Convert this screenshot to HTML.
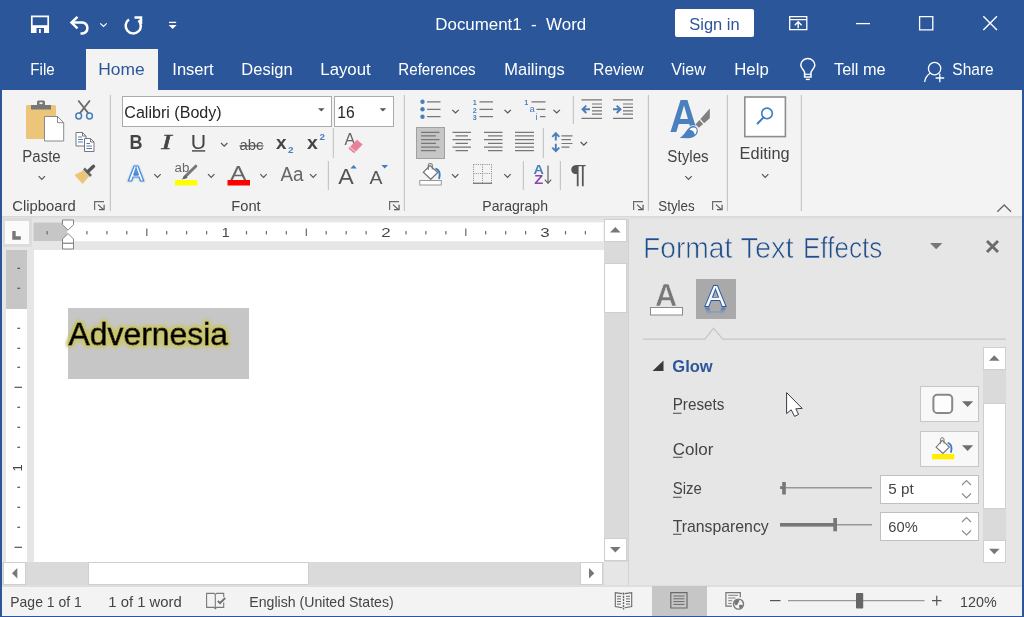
<!DOCTYPE html>
<html lang="en">
<head>
<meta charset="utf-8">
<title>Document1 - Word</title>
<style>
html,body{margin:0;padding:0;}
body{width:1024px;height:617px;overflow:hidden;position:relative;background:#e6e6e6;font-family:"Liberation Sans",sans-serif;}
.b{position:absolute;box-sizing:border-box;}
svg{position:absolute;left:0;top:0;will-change:transform;}
text{font-family:"Liberation Sans",sans-serif;}
</style>
</head>
<body>
<!-- structural boxes -->
<div class="b" style="left:0;top:0;width:1024px;height:90px;background:#2b579a"></div>
<div class="b" style="left:86px;top:49px;width:71.5px;height:41px;background:#f3f3f3"></div>
<div class="b" style="left:0;top:90px;width:1024px;height:127px;background:#f3f3f3;border-bottom:1px solid #d9d9d9"></div>
<div class="b" style="left:0;top:217px;width:1024px;height:3px;background:linear-gradient(#dedede,#e6e6e6)"></div>
<!-- ruler corner -->
<div class="b" style="left:3px;top:218px;width:29px;height:29px;background:#dcdcdc"></div>
<div class="b" style="left:5px;top:221px;width:24px;height:23px;background:#fbfbfb"></div>
<!-- horizontal ruler -->
<!-- page -->
<div class="b" style="left:34px;top:250px;width:570px;height:312px;background:#fff"></div>
<!-- vertical ruler -->
<div class="b" style="left:6px;top:250px;width:21px;height:311.5px;background:#fff"></div>
<div class="b" style="left:6px;top:250px;width:21px;height:59px;background:#c6c6c6"></div>
<!-- selection -->
<div class="b" style="left:68px;top:308px;width:181px;height:70.5px;background:#c6c6c6"></div>
<!-- v scrollbar -->
<div class="b" style="left:604px;top:219px;width:24px;height:343px;background:#dadada"></div>
<div class="b" style="left:628px;top:219px;width:1px;height:366px;background:#d2d2d2"></div>
<div class="b" style="left:604px;top:219px;width:23px;height:22.5px;background:#fff;border:1px solid #cfcfcf"></div>
<div class="b" style="left:604px;top:263px;width:23px;height:50px;background:#fff;border:1px solid #cfcfcf"></div>
<div class="b" style="left:604px;top:538px;width:23px;height:22.5px;background:#fff;border:1px solid #cfcfcf"></div>
<!-- h scrollbar -->
<div class="b" style="left:2px;top:562px;width:602px;height:23px;background:#dadada"></div>
<div class="b" style="left:3px;top:562px;width:22.5px;height:22.5px;background:#fff;border:1px solid #cfcfcf"></div>
<div class="b" style="left:88px;top:562px;width:220.5px;height:22.5px;background:#fff;border:1px solid #cfcfcf"></div>
<div class="b" style="left:580px;top:562px;width:22.5px;height:22.5px;background:#fff;border:1px solid #cfcfcf"></div>
<!-- pane tab selected -->
<div class="b" style="left:696px;top:278.6px;width:40.2px;height:40.2px;background:#a9a9a9"></div>
<!-- pane scrollbar -->
<div class="b" style="left:983px;top:347px;width:22.5px;height:215px;background:#dadada"></div>
<div class="b" style="left:983px;top:347px;width:22.5px;height:22.5px;background:#fff;border:1px solid #cfcfcf"></div>
<div class="b" style="left:983px;top:403px;width:22.5px;height:105.5px;background:#fff;border:1px solid #cfcfcf"></div>
<div class="b" style="left:983px;top:540px;width:22.5px;height:22.5px;background:#fff;border:1px solid #cfcfcf"></div>
<!-- pane controls -->
<div class="b" style="left:920px;top:386px;width:58.5px;height:36px;background:#f8f8f8;border:1px solid #c6c6c6"></div>
<div class="b" style="left:920px;top:431px;width:58.5px;height:35.5px;background:#f8f8f8;border:1px solid #c6c6c6"></div>
<div class="b" style="left:880px;top:475px;width:98.5px;height:28.5px;background:#fff;border:1px solid #c0c0c0"></div>
<div class="b" style="left:880px;top:512px;width:98.5px;height:28.5px;background:#fff;border:1px solid #c0c0c0"></div>
<!-- status bar -->
<div class="b" style="left:0;top:585px;width:1024px;height:32px;background:#f3f3f3;border-top:2px solid #dedede"></div>
<div class="b" style="left:652px;top:586px;width:54.7px;height:30px;background:#c6c6c6"></div>
<!-- ribbon controls -->
<div class="b" style="left:122px;top:96px;width:209.5px;height:30.5px;background:#fff;border:1px solid #ababab"></div>
<div class="b" style="left:334px;top:96px;width:59.5px;height:30.5px;background:#fff;border:1px solid #ababab"></div>
<div class="b" style="left:416px;top:127px;width:28.7px;height:31.5px;background:#c6c6c6;border:1px solid #a0a0a0"></div>
<div class="b" style="left:675px;top:9px;width:79px;height:28px;background:#fff;border-radius:2px"></div>
<!-- window borders -->
<div class="b" style="left:0;top:49px;width:2px;height:568px;background:#2b579a"></div>
<div class="b" style="left:1022px;top:49px;width:2px;height:568px;background:#2b579a"></div>
<div class="b" style="left:0;top:615.6px;width:1024px;height:1.4px;background:#2b579a"></div>
<svg width="1024" height="617" viewBox="0 0 1024 617">
<rect x="33.4" y="222.4" width="570.2" height="18.8" fill="#fff"/>
<rect x="33.4" y="222.4" width="33.8" height="18.8" fill="#c6c6c6"/>
<rect x="109.8" y="95" width="1.2" height="116" fill="#c6c6c6"/>
<rect x="403.8" y="95" width="1.2" height="116" fill="#c6c6c6"/>
<rect x="647.8" y="95" width="1.2" height="116" fill="#c6c6c6"/>
<rect x="726.8" y="95" width="1.2" height="116" fill="#c6c6c6"/>
<rect x="800.8" y="95" width="1.2" height="116" fill="#c6c6c6"/>
<rect x="332.8" y="128" width="1.2" height="30" fill="#c6c6c6"/>
<rect x="327.8" y="161" width="1.2" height="29" fill="#c6c6c6"/>
<rect x="572.8" y="96" width="1.2" height="28" fill="#c6c6c6"/>
<rect x="542.8" y="128" width="1.2" height="30" fill="#c6c6c6"/>
<rect x="522.8" y="161" width="1.2" height="29" fill="#c6c6c6"/>
<rect x="559.8" y="161" width="1.2" height="29" fill="#c6c6c6"/>
<rect x="46.5" y="231.1" width="1.2" height="3.3" fill="#666"/>
<rect x="86.3" y="231.1" width="1.2" height="3.3" fill="#666"/>
<rect x="106.3" y="231.1" width="1.2" height="3.3" fill="#666"/>
<rect x="126.2" y="231.1" width="1.2" height="3.3" fill="#666"/>
<rect x="146.2" y="228.5" width="1.2" height="7.5" fill="#666"/>
<rect x="166.1" y="231.1" width="1.2" height="3.3" fill="#666"/>
<rect x="186.0" y="231.1" width="1.2" height="3.3" fill="#666"/>
<rect x="206.0" y="231.1" width="1.2" height="3.3" fill="#666"/>
<rect x="245.9" y="231.1" width="1.2" height="3.3" fill="#666"/>
<rect x="265.8" y="231.1" width="1.2" height="3.3" fill="#666"/>
<rect x="285.7" y="231.1" width="1.2" height="3.3" fill="#666"/>
<rect x="305.7" y="228.5" width="1.2" height="7.5" fill="#666"/>
<rect x="325.6" y="231.1" width="1.2" height="3.3" fill="#666"/>
<rect x="345.6" y="231.1" width="1.2" height="3.3" fill="#666"/>
<rect x="365.5" y="231.1" width="1.2" height="3.3" fill="#666"/>
<rect x="405.4" y="231.1" width="1.2" height="3.3" fill="#666"/>
<rect x="425.3" y="231.1" width="1.2" height="3.3" fill="#666"/>
<rect x="445.3" y="231.1" width="1.2" height="3.3" fill="#666"/>
<rect x="465.2" y="228.5" width="1.2" height="7.5" fill="#666"/>
<rect x="485.1" y="231.1" width="1.2" height="3.3" fill="#666"/>
<rect x="505.1" y="231.1" width="1.2" height="3.3" fill="#666"/>
<rect x="525.0" y="231.1" width="1.2" height="3.3" fill="#666"/>
<rect x="564.9" y="231.1" width="1.2" height="3.3" fill="#666"/>
<rect x="584.8" y="231.1" width="1.2" height="3.3" fill="#666"/>
<rect x="17.3" y="267.7" width="2.8" height="1.2" fill="#555"/>
<rect x="17.3" y="287.7" width="2.8" height="1.2" fill="#555"/>
<rect x="17.3" y="327.7" width="2.8" height="1.2" fill="#555"/>
<rect x="17.3" y="347.7" width="2.8" height="1.2" fill="#555"/>
<rect x="17.3" y="366.7" width="2.8" height="1.2" fill="#555"/>
<rect x="17.3" y="406.7" width="2.8" height="1.2" fill="#555"/>
<rect x="17.3" y="426.7" width="2.8" height="1.2" fill="#555"/>
<rect x="17.3" y="446.7" width="2.8" height="1.2" fill="#555"/>
<rect x="17.3" y="486.7" width="2.8" height="1.2" fill="#555"/>
<rect x="17.3" y="506.7" width="2.8" height="1.2" fill="#555"/>
<rect x="17.3" y="526.6999999999999" width="2.8" height="1.2" fill="#555"/>
<rect x="14.5" y="386.7" width="7.5" height="1.2" fill="#555"/>
<rect x="14.5" y="546.6999999999999" width="7.5" height="1.2" fill="#555"/>
<path d="M100.3 23.3 l3.2 3.2 l3.2 -3.2" fill="none" stroke="#fff" stroke-width="1.2"/>
<path d="M38.6 176.2 l3.2 3.2 l3.2 -3.2" fill="none" stroke="#555" stroke-width="1.2"/>
<path d="M221 143 l3.2 3.2 l3.2 -3.2" fill="none" stroke="#555" stroke-width="1.2"/>
<path d="M154.3 174.2 l3.2 3.2 l3.2 -3.2" fill="none" stroke="#555" stroke-width="1.2"/>
<path d="M208 174.2 l3.2 3.2 l3.2 -3.2" fill="none" stroke="#555" stroke-width="1.2"/>
<path d="M260.3 174.2 l3.2 3.2 l3.2 -3.2" fill="none" stroke="#555" stroke-width="1.2"/>
<path d="M310 174.2 l3.2 3.2 l3.2 -3.2" fill="none" stroke="#555" stroke-width="1.2"/>
<path d="M452.3 109.8 l3.2 3.2 l3.2 -3.2" fill="none" stroke="#555" stroke-width="1.2"/>
<path d="M504.5 109.8 l3.2 3.2 l3.2 -3.2" fill="none" stroke="#555" stroke-width="1.2"/>
<path d="M553.5 109.8 l3.2 3.2 l3.2 -3.2" fill="none" stroke="#555" stroke-width="1.2"/>
<path d="M580.6 142 l3.2 3.2 l3.2 -3.2" fill="none" stroke="#555" stroke-width="1.2"/>
<path d="M452 174.2 l3.2 3.2 l3.2 -3.2" fill="none" stroke="#555" stroke-width="1.2"/>
<path d="M504.3 174.2 l3.2 3.2 l3.2 -3.2" fill="none" stroke="#555" stroke-width="1.2"/>
<path d="M685.3 176.2 l3.2 3.2 l3.2 -3.2" fill="none" stroke="#555" stroke-width="1.2"/>
<path d="M762 174.2 l3.2 3.2 l3.2 -3.2" fill="none" stroke="#555" stroke-width="1.2"/>
<path d="M94.6 210.0 V201.6 H104.0" fill="none" stroke="#6a6a6a" stroke-width="1.2"/><path d="M98.0 204.6 L103.5 209.6 M99.0 209.6 H104.1 V204.8" fill="none" stroke="#5a5a5a" stroke-width="1.2"/>
<path d="M389.6 210.0 V201.6 H399.0" fill="none" stroke="#6a6a6a" stroke-width="1.2"/><path d="M393.0 204.6 L398.5 209.6 M394.0 209.6 H399.1 V204.8" fill="none" stroke="#5a5a5a" stroke-width="1.2"/>
<path d="M633.6 210.0 V201.6 H643.0" fill="none" stroke="#6a6a6a" stroke-width="1.2"/><path d="M637.0 204.6 L642.5 209.6 M638.0 209.6 H643.1 V204.8" fill="none" stroke="#5a5a5a" stroke-width="1.2"/>
<path d="M712.6 210.0 V201.6 H722.0" fill="none" stroke="#6a6a6a" stroke-width="1.2"/><path d="M716.0 204.6 L721.5 209.6 M717.0 209.6 H722.1 V204.8" fill="none" stroke="#5a5a5a" stroke-width="1.2"/>
<!-- title bar icons -->
<g fill="none" stroke="#fff">
<!-- save -->
<path d="M31.8 16.3 H48.2 V32.2 H31.8 Z" stroke-width="1.7"/>
<path d="M32 25.2 H48 V32 H32 Z" fill="#fff" stroke="none"/>
<path d="M36.5 28 H44 V33 H36.5 Z" fill="#2b579a" stroke="none"/>
<path d="M39 29 H40.8 V33 H39 Z" fill="#fff" stroke="none"/>
<!-- undo -->
<path d="M77.5 16.8 L71.5 22.6 L77.5 28.4" stroke-width="2.5"/>
<path d="M72 22.6 H82.5 A6 5.6 0 0 1 82.5 33.6 H80.5" stroke-width="2.5"/>
<!-- redo -->
<path d="M129 19.5 A7.6 7.6 0 1 0 138.5 20.3" stroke-width="2.5"/>
<path d="M134.5 17.4 H141 V24" stroke-width="2.5"/>
<!-- qat -->
<path d="M169 22.4 H176.2" stroke-width="1.3"/>
<path d="M168.6 25 H176.6 L172.6 29 Z" fill="#fff" stroke="none"/>
<!-- ribbon display options -->
<path d="M789.7 16.7 H806.8 V29.6 H789.7 Z M789.7 19.6 H806.8" stroke-width="1.3"/>
<path d="M798.2 28.2 V22 M794.8 25.2 L798.2 21.8 L801.6 25.2" stroke-width="1.4"/>
<!-- min max close -->
<path d="M856 23.6 H870" stroke-width="1.3"/>
<path d="M919.6 16.6 H932.8 V29.8 H919.6 Z" stroke-width="1.3"/>
<path d="M983.3 16.3 L997 30 M997 16.3 L983.3 30" stroke-width="1.4"/>
<!-- bulb -->
<path d="M804.6 77 V72.5 C804.4 69.7 800.8 68.8 800.8 65 A7 6.45 0 0 1 814.8 65 C814.8 68.8 811.2 69.7 811 72.5 V77 Z" stroke-width="1.5"/>
<path d="M804.6 74.3 H811" stroke-width="1.2"/>
<path d="M805.8 79.4 H809.8" stroke-width="1.4"/>
<!-- share -->
<circle cx="934.6" cy="68.6" r="6.2" stroke-width="1.3"/>
<path d="M924.6 82 C925.3 77.5 927.5 74.8 930.2 73.2" stroke-width="1.3"/>
<path d="M939.8 73.8 V82.2 M935.6 78 H944.2" stroke-width="1.3"/>
</g>
<!-- clipboard group -->
<rect x="26" y="105" width="30" height="34" rx="1.5" fill="#edc57a"/>
<path d="M37 105 V102 Q37 100.5 38.5 100.5 H43.5 Q45 100.5 45 102 V105 H51 V109.5 H31 V105 Z" fill="#777"/>
<rect x="39.5" y="102.3" width="3" height="1.8" fill="#f3f3f3"/>
<path d="M44.5 116.5 H57.5 L63.7 122.7 V141 H44.5 Z" fill="#fff" stroke="#8a8a8a" stroke-width="1"/>
<path d="M57.5 116.5 V122.7 H63.7" fill="none" stroke="#8a8a8a" stroke-width="1"/>
<!-- scissors -->
<path d="M78.3 100.5 L88.6 113.6 M89.9 100.5 L79.6 113.6" stroke="#6a6a6a" stroke-width="1.8" fill="none"/>
<circle cx="78.7" cy="116" r="2.9" fill="none" stroke="#4a7ebb" stroke-width="1.5"/>
<circle cx="89.5" cy="116" r="2.9" fill="none" stroke="#4a7ebb" stroke-width="1.5"/>
<!-- copy -->
<path d="M76 132.5 H82.5 L86 136 V146 H76 Z" fill="#fff" stroke="#777" stroke-width="1"/>
<path d="M82.5 132.5 V136 H86" fill="none" stroke="#777" stroke-width="1"/>
<path d="M78 137 H82 M78 139.5 H83 M78 142 H83" stroke="#4a7ebb" stroke-width="1"/>
<path d="M84.5 138.5 H90.5 L94 142 V151.5 H84.5 Z" fill="#fff" stroke="#777" stroke-width="1"/>
<path d="M90.5 138.5 V142 H94" fill="none" stroke="#777" stroke-width="1"/>
<path d="M86.5 143.5 H90 M86.5 146 H92 M86.5 148.5 H92" stroke="#4a7ebb" stroke-width="1"/>
<!-- format painter -->
<path d="M74.5 175 L83.5 170.3 L89 176.5 L82.5 184 Z" fill="#edc57a"/>
<path d="M84 168.5 L91 176" stroke="#666" stroke-width="2.6" fill="none"/>
<path d="M88 171.5 L93.5 166.3" stroke="#555" stroke-width="3.4" fill="none" stroke-linecap="round"/>
<!-- font group -->
<path d="M318 108.3 H324.6 L321.3 111.6 Z" fill="#555"/>
<path d="M379.6 108.3 H386.2 L382.9 111.6 Z" fill="#555"/>
<text x="129.6" y="149" font-size="19.5" font-weight="bold" fill="#444" textLength="13" lengthAdjust="spacingAndGlyphs">B</text>
<text x="161.3" y="149" font-size="20.5" font-style="italic" fill="#444" stroke="#444" stroke-width="0.5" style="font-family:'Liberation Serif',serif" textLength="10.4" lengthAdjust="spacingAndGlyphs">I</text>
<text x="190.8" y="149" font-size="19.5" fill="#444" textLength="15.4" lengthAdjust="spacingAndGlyphs">U</text>
<rect x="192" y="150.2" width="13.2" height="1.4" fill="#444"/>
<text x="239.5" y="150" font-size="15.5" fill="#555" textLength="24" lengthAdjust="spacingAndGlyphs">abc</text>
<rect x="239.5" y="145.3" width="24" height="1.2" fill="#555"/>
<text x="276" y="149" font-size="18.5" font-weight="bold" fill="#444" textLength="10.5" lengthAdjust="spacingAndGlyphs">x</text>
<text x="288" y="153" font-size="8.5" font-weight="bold" fill="#4a7ebb" textLength="5.5" lengthAdjust="spacingAndGlyphs">2</text>
<text x="307" y="149" font-size="18.5" font-weight="bold" fill="#444" textLength="10.8" lengthAdjust="spacingAndGlyphs">x</text>
<text x="319.6" y="139.6" font-size="8.5" font-weight="bold" fill="#4a7ebb" textLength="5.5" lengthAdjust="spacingAndGlyphs">2</text>
<text x="344.4" y="145" font-size="16" fill="#666" textLength="10.8" lengthAdjust="spacingAndGlyphs">A</text>
<path d="M357 139.7 L362.7 144.6 L354 153.3 L348.3 148.6 Z" fill="#e8829a"/>
<path d="M349.8 147 L355.6 151.8" stroke="#f3f3f3" stroke-width="0.8"/>
<!-- text effects A -->
<text x="127.8" y="181" font-size="22.5" font-weight="bold" fill="#fff" stroke="#4a8ad4" stroke-width="1.2" textLength="16.6" lengthAdjust="spacingAndGlyphs" style="filter:drop-shadow(0 0 1px #9cc3f0)">A</text>
<path d="M136 170.2 L138.3 175.8 H133.7 Z" fill="#4a8ad4"/>
<!-- highlight -->
<text x="174.6" y="172.4" font-size="12.5" fill="#666" textLength="14.8" lengthAdjust="spacingAndGlyphs">ab</text>
<path d="M195.8 166.2 L184.5 177.3" stroke="#777" stroke-width="3" fill="none" stroke-linecap="round"/>
<path d="M185.8 174.8 L181.5 179.6 L187.5 178 Z" fill="#666"/>
<rect x="175" y="180" width="22.2" height="5.5" fill="#ffff00"/>
<!-- font color -->
<text x="230.3" y="180" font-size="21" fill="#666" textLength="16" lengthAdjust="spacingAndGlyphs">A</text>
<rect x="227.5" y="180" width="22.5" height="5.5" fill="#ff0000"/>
<!-- Aa -->
<text x="280.5" y="181" font-size="19.5" fill="#666" textLength="23" lengthAdjust="spacingAndGlyphs">Aa</text>
<!-- grow/shrink -->
<text x="338.3" y="183.5" font-size="21.8" fill="#555" textLength="15.5" lengthAdjust="spacingAndGlyphs">A</text>
<path d="M350.4 168.6 L353.6 165 L356.8 168.6 Z" fill="#3b7cc4"/>
<text x="369.5" y="183.5" font-size="18.2" fill="#555" textLength="13" lengthAdjust="spacingAndGlyphs">A</text>
<path d="M381.4 165 H388 L384.7 168.6 Z" fill="#3b7cc4"/>
<!-- paragraph group -->
<g fill="#4a7ebb">
<circle cx="422.5" cy="101.8" r="2.2"/><circle cx="422.5" cy="109.3" r="2.2"/><circle cx="422.5" cy="116.7" r="2.2"/>
</g>
<g stroke="#777" stroke-width="1.2" fill="none">
<path d="M427 101.8 H440.5 M427 109.3 H440.5 M427 116.7 H440.5"/>
<path d="M479.5 101.8 H493 M479.5 109.3 H493 M479.5 116.7 H493"/>
<path d="M531.5 101.8 H545.5 M536.5 109.3 H545.5 M540 116.7 H545.5"/>
<!-- align left -->
<path d="M421 132.3 H439.5 M421 135.9 H436 M421 139.6 H439.5 M421 143.4 H436 M421 147.1 H439.5 M421 150.7 H436"/>
<path d="M452.5 132.3 H471 M455.5 135.9 H468 M452.5 139.6 H471 M455.5 143.4 H468 M452.5 147.1 H471 M455.5 150.7 H468"/>
<path d="M484 132.3 H502.5 M488 135.9 H502.5 M484 139.6 H502.5 M488 143.4 H502.5 M484 147.1 H502.5 M488 150.7 H502.5"/>
<path d="M515 132.3 H534 M515 135.9 H534 M515 139.6 H534 M515 143.4 H534 M515 147.1 H534 M515 150.7 H534"/>
<!-- line spacing lines -->
<path d="M561.5 135.9 H572.5 M561.5 139.7 H571 M561.5 143.5 H572.5 M561.5 147.2 H569.5"/>
<!-- indent -->
<path d="M581.5 99.8 H602 M592 104 H602 M592 107.4 H602 M592 110.8 H602 M592 114.2 H602 M581.5 118.4 H602"/>
<path d="M613 99.8 H633 M623 104 H633 M623 107.4 H633 M623 110.8 H633 M623 114.2 H633 M613 118.4 H633"/>
</g>
<g font-weight="bold" fill="#4a7ebb" font-size="8">
<text x="472.7" y="105.1" textLength="4" lengthAdjust="spacingAndGlyphs">1</text><text x="472.7" y="112.6" textLength="4" lengthAdjust="spacingAndGlyphs">2</text><text x="472.7" y="120.1" textLength="4" lengthAdjust="spacingAndGlyphs">3</text>
<text x="524.3" y="105.1" textLength="4" lengthAdjust="spacingAndGlyphs">1</text><text x="529.6" y="112.4" font-weight="normal" font-size="9.5">a</text><text x="535.4" y="120" font-weight="normal" font-size="9.5">i</text>
</g>
<g stroke="#4a7ebb" fill="none" stroke-width="1.9">
<path d="M590 109.3 H583 M586.3 105.6 L582.5 109.3 L586.3 113"/>
<path d="M613 109.3 H620 M616.7 105.6 L620.5 109.3 L616.7 113"/>
<path d="M555.8 133.2 V140.6 M555.8 143.8 V151.2 M552.3 136.8 L555.8 133.2 L559.3 136.8 M552.3 147.6 L555.8 151.2 L559.3 147.6"/>
</g>
<!-- shading -->
<path d="M430 165.5 L437.7 172.5 L430.8 179.3 L423.3 172.3 Z" fill="#fff" stroke="#777" stroke-width="1.2"/>
<path d="M428.3 170 V165 Q428.3 163.5 430.3 163.5 Q432.3 163.5 432.3 165 V169.5" fill="none" stroke="#777" stroke-width="1.1"/>
<path d="M436.2 168.8 Q441 171 439.2 178.2" fill="none" stroke="#3b7cc4" stroke-width="1.9" stroke-linecap="round"/>
<rect x="419.8" y="180.5" width="21.5" height="4.5" fill="#fff" stroke="#999" stroke-width="1"/>
<!-- borders -->
<path d="M473.5 164.5 H491.5 M473.5 164.5 V183 M491.5 164.5 V183 M482.5 164.5 V183 M473.5 173.5 H491.5" stroke="#8a8a8a" stroke-width="1" stroke-dasharray="1 1.2" fill="none"/>
<path d="M473 183.3 H492" stroke="#777" stroke-width="1.3"/>
<!-- sort -->
<text x="533.6" y="173.8" font-size="13.5" font-weight="bold" fill="#4a7ebb" textLength="10.4" lengthAdjust="spacingAndGlyphs">A</text>
<text x="534.2" y="184" font-size="12" font-weight="bold" fill="#8e44ad" textLength="9" lengthAdjust="spacingAndGlyphs">Z</text>
<path d="M548 165.5 V183 M544.8 179.7 L548 183.3 L551.2 179.7" stroke="#666" stroke-width="1.2" fill="none"/>
<!-- pilcrow -->
<text x="570" y="183.4" font-size="25" fill="#555" textLength="17" lengthAdjust="spacingAndGlyphs">¶</text>
<!-- styles / editing -->
<text x="669.4" y="131.8" font-size="46" font-weight="bold" fill="#4a80bd" textLength="29" lengthAdjust="spacingAndGlyphs">A</text>
<path d="M709.8 108.6 V118.3 L704.1 123.2 L700.4 119.1 Z" fill="#808080"/>
<path d="M699.4 120.1 L703.1 124 L698.9 127.7 L695.4 124.4 Z" fill="#808080"/>
<path d="M679.6 138 C685 135 686.5 129 690.5 126.8 C694 125 697.5 126.8 697.8 130.5 C698 134.5 694 138 688.5 138.2 Z" fill="#4a80bd" stroke="#f3f3f3" stroke-width="1.8" paint-order="stroke"/>
<path d="M689.5 129.8 C691 127.7 694.5 126.7 696.3 128.7 C697.3 130.5 696.3 133 694.8 134.8 C694.3 132 692.5 130.2 689.5 129.8 Z" fill="#fff"/>
<rect x="744.8" y="97" width="40.6" height="39.6" fill="#fff" stroke="#8e8e8e" stroke-width="1.6"/>
<circle cx="767" cy="113.4" r="5.3" fill="none" stroke="#3b7cc4" stroke-width="1.6"/>
<path d="M763.3 117.6 L757.6 123.5" stroke="#3b7cc4" stroke-width="2" stroke-linecap="round"/>
<!-- ruler markers -->
<path d="M14 231 V238 H20.8" fill="none" stroke="#777" stroke-width="3.4"/>
<path d="M62.5 220 H73.5 V224.7 L68 230.2 L62.5 224.7 Z" fill="#fff" stroke="#777" stroke-width="0.9"/>
<path d="M62.5 243.3 V239 L68 233.5 L73.5 239 V243.3 Z" fill="#fff" stroke="#777" stroke-width="0.9"/>
<path d="M62.5 243.3 H73.5 V249 H62.5 Z" fill="#fff" stroke="#777" stroke-width="0.9"/>
<!-- vertical ruler 1 -->
<text x="0" y="0" font-size="13" fill="#444" transform="translate(22 471.5) rotate(-90)">1</text>
<!-- scrollbar arrows -->
<g fill="#777">
<path d="M610 232.5 L615.3 227 L620.6 232.5 Z"/>
<path d="M610 547 H620.6 L615.3 552.5 Z"/>
<path d="M17.3 568 V578.6 L12 573.3 Z"/>
<path d="M589 568 V578.6 L594.3 573.3 Z"/>
<path d="M989 360.7 L994.3 355.2 L999.6 360.7 Z"/>
<path d="M989 548.8 H999.6 L994.3 554.3 Z"/>
<path d="M930 243 H942.4 L936.2 249.2 Z"/>
</g>
<path d="M987 241 L998 252 M998 241 L987 252" stroke="#6b6b6b" stroke-width="2.9" fill="none"/>
<!-- pane tab icons -->
<text x="654.9" y="305.5" font-size="32" font-weight="bold" fill="#777" stroke="#e6e6e6" stroke-width="0.6" textLength="22.2" lengthAdjust="spacingAndGlyphs">A</text>
<rect x="650.5" y="307.5" width="32" height="7.5" fill="#fff" stroke="#8a8a8a" stroke-width="1"/>
<linearGradient id="rf" x1="0" y1="0" x2="0" y2="1"><stop offset="0" stop-color="#3f68ad" stop-opacity="0.8"/><stop offset="1" stop-color="#7f9ccb" stop-opacity="0.15"/></linearGradient>
<path d="M704.8 307.6 H709.3 L710.8 311.2 H720 L721.5 307.6 H726 L723.3 314.6 H720 L719.2 313 H711.6 L710.8 314.6 H707.5 Z" fill="url(#rf)"/>
<text x="705.4" y="306" font-size="29.2" fill="#f4f8ff" stroke="#2b579a" stroke-width="1.9" paint-order="stroke" textLength="19.9" lengthAdjust="spacingAndGlyphs">A</text>
<path d="M643 339.2 H704.8 L713.5 328.3 L722.8 339.2 H1006" fill="none" stroke="#c6c6c6" stroke-width="1.2"/>
<!-- glow triangle -->
<path d="M663.5 360.5 V371 H652.5 Z" fill="#3a3a3a"/>
<!-- label underlines -->
<path d="M673 413.3 H681.5 M673 457.3 H682.5 M673 497.3 H681.5 M673 534.3 H681.5" stroke="#444" stroke-width="1.1"/>
<!-- presets -->
<rect x="933.4" y="394.8" width="18.8" height="18.2" rx="3.8" fill="#fdfdfd" stroke="#888" stroke-width="2"/>
<path d="M962 401.3 H973.2 L967.6 407 Z" fill="#6e6e6e"/>
<path d="M962 445.3 H973.2 L967.6 451 Z" fill="#6e6e6e"/>
<!-- color bucket -->
<path d="M942.3 440.4 L949.4 447 L942.9 453.5 L936.1 447.1 Z" fill="#fff" stroke="#777" stroke-width="1.1"/>
<path d="M940.6 443.8 V439.3 Q940.6 437.7 942.3 437.7 Q944 437.7 944 439.3 V443.6" fill="none" stroke="#777" stroke-width="1"/>
<path d="M948.4 443 Q952.8 445 951 452" fill="none" stroke="#3b7cc4" stroke-width="1.8" stroke-linecap="round"/>
<rect x="932" y="454" width="22.2" height="5.3" fill="#ffee00"/>
<!-- sliders -->
<path d="M780 487.7 H872" stroke="#979797" stroke-width="1.4"/>
<rect x="782.2" y="482" width="3.6" height="12.5" fill="#777"/>
<rect x="780" y="486.3" width="3" height="2.6" fill="#777"/>
<path d="M836 524.8 H872" stroke="#979797" stroke-width="1.4"/>
<rect x="780" y="523" width="56" height="3.6" fill="#777"/>
<rect x="833.3" y="518" width="3.7" height="13.3" fill="#777"/>
<!-- spinner carets -->
<g fill="none" stroke="#8a8a8a" stroke-width="1.1">
<path d="M962 485 L966.5 480.5 L971 485 M962 493.5 L966.5 498 L971 493.5"/>
<path d="M962 522 L966.5 517.5 L971 522 M962 530.5 L966.5 535 L971 530.5"/>
</g>
<!-- mouse cursor -->
<path d="M786.6 392.6 V413.6 L791.2 409.8 L794.6 416.4 L798.6 414.4 L795.8 408.8 L802.2 408.4 Z" fill="#fff" stroke="#3a3a48" stroke-width="1" stroke-linejoin="miter"/>
<!-- collapse ribbon -->
<path d="M997.3 211.8 L1004.2 205 L1011 211.8" fill="none" stroke="#666" stroke-width="1.3"/>
<!-- status bar icons -->
<g fill="none" stroke="#6a6a6a" stroke-width="1.1">
<!-- proofing -->
<path d="M215.3 594.4 L214 593.4 H206.6 V607.4 H214 L215.3 608.8 M215.3 594.4 L216.6 593.4 H223.7 V597 M223.7 602.6 V607.4 H216.6 L215.3 608.8 M215.3 594.4 V609.2" stroke="#7a7a7a"/>
<path d="M217.8 600.9 L220 603.1 L225.2 598" stroke="#707070" stroke-width="1.9"/>
<!-- read mode -->
<path d="M622.3 593.6 L615.3 592.6 V606.6 L622.3 607.8 M624.7 593.6 L631.7 592.6 V606.6 L624.7 607.8"/>
<path d="M623.5 592.6 V609.6" stroke-width="1.4" stroke-dasharray="2.2 0.9"/>
<path d="M617 596.3 H621 M617 598.9 H621 M617 601.5 H621 M617 604.1 H621 M626 596.3 H630 M626 598.9 H630 M626 601.5 H630 M626 604.1 H630" stroke-width="1"/>
<!-- print layout -->
<path d="M670.8 592.6 H687 V608 H670.8 Z" stroke-width="1.2"/>
<path d="M673.3 596 H684.5 M673.3 598.8 H684.5 M673.3 601.6 H684.5 M673.3 604.4 H684.5" stroke-width="1"/>
<!-- web layout -->
<path d="M732 606.1 H725.9 V592.7 H740.3 V597.2" stroke="#777" stroke-width="1.2"/>
<path d="M728.2 595.3 H738 M728.2 598 H735.5 M728.2 600.7 H732.2 M728.2 603.4 H731.6" stroke="#808080" stroke-width="1"/>
</g>
<circle cx="738.5" cy="604.1" r="5" fill="#f3f3f3" stroke="#777" stroke-width="1.4"/>
<path d="M734.6 601.2 Q736.3 599.4 739.2 599.6 Q739.8 601.6 738.2 603 Q737.6 605.2 735.8 605.6 Q734 603.6 734.6 601.2 Z M739.2 605 Q741.4 604.2 743 605.4 Q742.4 607.8 740.2 608.6 Q738.4 607 739.2 605 Z" fill="#777"/>
<!-- zoom slider -->
<path d="M770 600.6 H780.5" stroke="#555" stroke-width="1.2"/>
<path d="M788 600.6 H924.5" stroke="#999" stroke-width="1.1"/>
<rect x="856" y="593" width="7.2" height="15.5" rx="0.8" fill="#666"/>
<path d="M932 600.6 H941.5 M936.75 595.8 V605.4" stroke="#555" stroke-width="1.2"/>
<text x="435.3" y="30" font-size="16.7" fill="#fff" textLength="150.9" lengthAdjust="spacingAndGlyphs" xml:space="preserve" >Document1  -  Word</text>
<text x="689.3" y="29.5" font-size="16.5" fill="#2b579a" textLength="50.4" lengthAdjust="spacingAndGlyphs" xml:space="preserve" >Sign in</text>
<text x="30.3" y="74.8" font-size="16.3" fill="#fff" textLength="24.4" lengthAdjust="spacingAndGlyphs" xml:space="preserve" >File</text>
<text x="98.3" y="74.8" font-size="16.3" fill="#2b579a" textLength="46.4" lengthAdjust="spacingAndGlyphs" xml:space="preserve" >Home</text>
<text x="172.3" y="74.8" font-size="16.3" fill="#fff" textLength="41.4" lengthAdjust="spacingAndGlyphs" xml:space="preserve" >Insert</text>
<text x="241.3" y="74.8" font-size="16.3" fill="#fff" textLength="51.4" lengthAdjust="spacingAndGlyphs" xml:space="preserve" >Design</text>
<text x="320.3" y="74.8" font-size="16.3" fill="#fff" textLength="50.4" lengthAdjust="spacingAndGlyphs" xml:space="preserve" >Layout</text>
<text x="398.3" y="74.8" font-size="16.3" fill="#fff" textLength="77.4" lengthAdjust="spacingAndGlyphs" xml:space="preserve" >References</text>
<text x="504.3" y="74.8" font-size="16.3" fill="#fff" textLength="60.4" lengthAdjust="spacingAndGlyphs" xml:space="preserve" >Mailings</text>
<text x="593.3" y="74.8" font-size="16.3" fill="#fff" textLength="50.4" lengthAdjust="spacingAndGlyphs" xml:space="preserve" >Review</text>
<text x="671.3" y="74.8" font-size="16.3" fill="#fff" textLength="34.4" lengthAdjust="spacingAndGlyphs" xml:space="preserve" >View</text>
<text x="734.3" y="74.8" font-size="16.3" fill="#fff" textLength="34.4" lengthAdjust="spacingAndGlyphs" xml:space="preserve" >Help</text>
<text x="834.0" y="74.8" font-size="16.3" fill="#fff" textLength="51.7" lengthAdjust="spacingAndGlyphs" xml:space="preserve" >Tell me</text>
<text x="952.3" y="75.2" font-size="16.3" fill="#fff" textLength="41.4" lengthAdjust="spacingAndGlyphs" xml:space="preserve" >Share</text>
<text x="124.3" y="118" font-size="16.7" fill="#262626" textLength="97.4" lengthAdjust="spacingAndGlyphs" xml:space="preserve" >Calibri (Body)</text>
<text x="337.3" y="118" font-size="16.7" fill="#262626" textLength="17.4" lengthAdjust="spacingAndGlyphs" xml:space="preserve" >16</text>
<text x="22.3" y="161.8" font-size="15.8" fill="#444" textLength="38.4" lengthAdjust="spacingAndGlyphs" xml:space="preserve" >Paste</text>
<text x="12.3" y="211" font-size="14.6" fill="#444" textLength="63.4" lengthAdjust="spacingAndGlyphs" xml:space="preserve" >Clipboard</text>
<text x="231.3" y="211" font-size="14.6" fill="#444" textLength="29.4" lengthAdjust="spacingAndGlyphs" xml:space="preserve" >Font</text>
<text x="482.3" y="211" font-size="14.6" fill="#444" textLength="65.7" lengthAdjust="spacingAndGlyphs" xml:space="preserve" >Paragraph</text>
<text x="667.3" y="162" font-size="16" fill="#444" textLength="41.4" lengthAdjust="spacingAndGlyphs" xml:space="preserve" >Styles</text>
<text x="658.3" y="211" font-size="14.6" fill="#444" textLength="36.4" lengthAdjust="spacingAndGlyphs" xml:space="preserve" >Styles</text>
<text x="739.6" y="159.3" font-size="16.3" fill="#444" textLength="50.1" lengthAdjust="spacingAndGlyphs" xml:space="preserve" >Editing</text>
<text x="672.3" y="372" font-size="16.3" fill="#2b579a" textLength="40.4" lengthAdjust="spacingAndGlyphs" xml:space="preserve" font-weight="bold">Glow</text>
<text x="672.7" y="410.4" font-size="17" fill="#444" textLength="51.7" lengthAdjust="spacingAndGlyphs" xml:space="preserve" >Presets</text>
<text x="672.7" y="454.7" font-size="17" fill="#444" textLength="40.6" lengthAdjust="spacingAndGlyphs" xml:space="preserve" >Color</text>
<text x="672.7" y="494.2" font-size="17" fill="#444" textLength="29.0" lengthAdjust="spacingAndGlyphs" xml:space="preserve" >Size</text>
<text x="672.7" y="531.7" font-size="17" fill="#444" textLength="96.0" lengthAdjust="spacingAndGlyphs" xml:space="preserve" >Transparency</text>
<text x="888.3" y="494.4" font-size="14.6" fill="#444" textLength="25.4" lengthAdjust="spacingAndGlyphs" xml:space="preserve" >5 pt</text>
<text x="888.3" y="531.5" font-size="14.6" fill="#444" textLength="29.4" lengthAdjust="spacingAndGlyphs" xml:space="preserve" >60%</text>
<text x="10.3" y="606.7" font-size="14.4" fill="#444" textLength="71.4" lengthAdjust="spacingAndGlyphs" xml:space="preserve" >Page 1 of 1</text>
<text x="108.3" y="606.7" font-size="14.4" fill="#444" textLength="73.4" lengthAdjust="spacingAndGlyphs" xml:space="preserve" >1 of 1 word</text>
<text x="249.3" y="606.7" font-size="14.4" fill="#444" textLength="144.4" lengthAdjust="spacingAndGlyphs" xml:space="preserve" >English (United States)</text>
<text x="960.1" y="606.7" font-size="14.4" fill="#444" textLength="36.6" lengthAdjust="spacingAndGlyphs" xml:space="preserve" >120%</text>
<text x="221.8" y="237" font-size="13" fill="#444" textLength="7.9" lengthAdjust="spacingAndGlyphs" xml:space="preserve" >1</text>
<text x="381.3" y="237" font-size="13" fill="#444" textLength="9.4" lengthAdjust="spacingAndGlyphs" xml:space="preserve" >2</text>
<text x="540.3" y="237" font-size="13" fill="#444" textLength="9.4" lengthAdjust="spacingAndGlyphs" xml:space="preserve" >3</text>
<text y="257.7" font-size="30.2" fill="#1f4e8c" stroke="#e6e6e6" stroke-width="0.7"><tspan x="643" textLength="89.4" lengthAdjust="spacingAndGlyphs">Format</tspan> <tspan x="740.4" textLength="53.2" lengthAdjust="spacingAndGlyphs">Text</tspan> <tspan x="803" textLength="79.4" lengthAdjust="spacingAndGlyphs">Effects</tspan></text>
<defs>
<filter id="glow" x="-10%" y="-40%" width="120%" height="180%">
<feGaussianBlur in="SourceAlpha" stdDeviation="2.2" result="b0"/>
<feComponentTransfer in="b0" result="d"><feFuncA type="linear" slope="7" intercept="-0.1"/></feComponentTransfer>
<feGaussianBlur in="d" stdDeviation="1.1" result="bl"/>
<feFlood flood-color="#cac570" result="c"/>
<feComposite in="c" in2="bl" operator="in" result="g"/>
<feMerge><feMergeNode in="g"/><feMergeNode in="SourceGraphic"/></feMerge>
</filter>
</defs>
<text x="68.6" y="345.2" font-size="30.6" fill="#000" stroke="#000" stroke-width="0.8" textLength="159.4" lengthAdjust="spacingAndGlyphs" filter="url(#glow)">Advernesia</text>
</svg>
</body>
</html>
